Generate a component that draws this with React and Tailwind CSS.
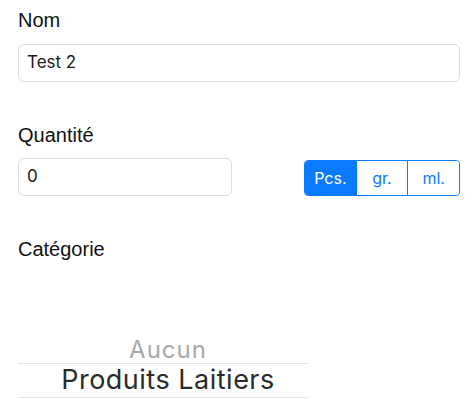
import React, { useState } from "react";

const units = ["Pcs.", "gr.", "ml."];

const Label = ({ children, className = "" }) => (
  <div className={`text-[20px] leading-[24px] text-[#111] ${className}`}>{children}</div>
);

export default function App() {
  const [unit, setUnit] = useState("Pcs.");

  return (
    <div
      className="w-[474px] h-[399px] overflow-hidden bg-white pl-[18px] pr-[14px] pt-[8px]"
      style={{ fontFamily: '"Liberation Sans", Arial, sans-serif' }}
    >
      <Label>Nom</Label>
      <div className="mt-[12px] h-[38px] rounded-[6px] border border-[#dcdcdc] flex items-center px-[8px] font-['Inter'] text-[17px] text-[#1a1a1a]">
        Test 2
      </div>

      <Label className="mt-[41px]">Quantité</Label>
      <div className="mt-[11px] flex items-center justify-between">
        <div className="w-[214px] h-[38px] rounded-[6px] border border-[#dcdcdc] flex items-center px-[8px] font-['Inter'] text-[17px] text-[#1a1a1a]">
          0
        </div>
        <div className="flex h-[36px] w-[156px] mt-[1px] rounded-[4px] border border-[#0a7aff] overflow-hidden font-['Inter']">
          {units.map((u, i) => (
            <button
              key={u}
              onClick={() => setUnit(u)}
              className={`flex-1 flex items-center justify-center text-[16px] ${
                i > 0 ? "border-l border-[#0a7aff]" : ""
              } ${unit === u ? "bg-[#0a7aff] text-white" : "bg-white text-[#0a7aff]"}`}
            >
              {u}
            </button>
          ))}
        </div>
      </div>

      <Label className="mt-[41px]">Catégorie</Label>
      <div className="mt-[76px] w-[290px] flex flex-col font-['Inter']">
        <div className="h-[26px] leading-[26px] text-center text-[24px] tracking-[1px] text-[#a8a8a8] border-b border-[#e3e3e3] box-content pl-[10px]">
          Aucun
        </div>
        <div className="h-[33px] leading-[31px] text-center text-[27px] tracking-[0.5px] text-[#2b2b2b] border-b border-[#e3e3e3] box-content pl-[10px]">
          Produits Laitiers
        </div>
      </div>
    </div>
  );
}
